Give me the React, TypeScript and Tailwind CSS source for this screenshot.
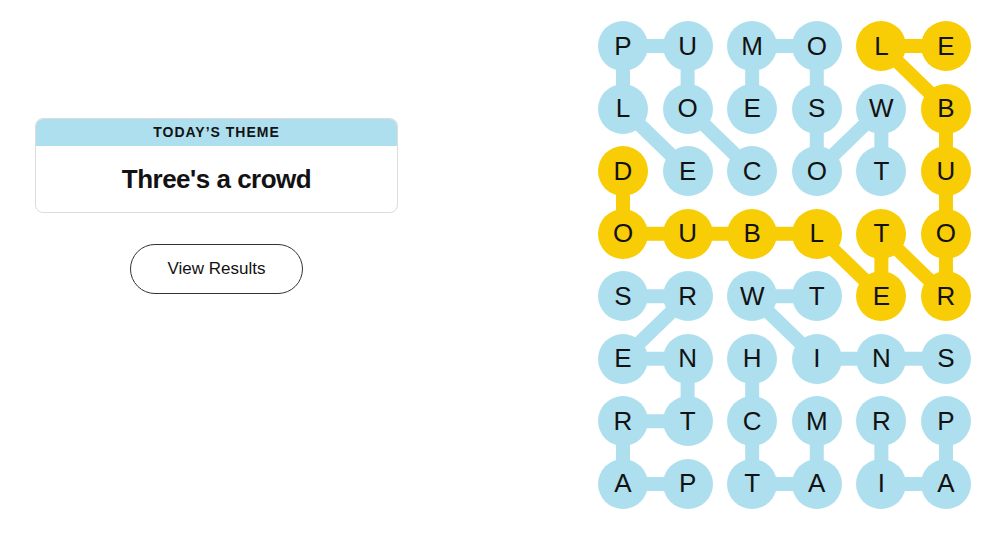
import React from 'react';

const BLUE = '#aedfee';
const YELLOW = '#f8cd05';

const letters = [
  'PUMOLE',
  'LOESWB',
  'DECOTU',
  'OUBLTO',
  'SRWTER',
  'ENHINS',
  'RTCMRP',
  'APTAIA',
];

// each found word as a path of [row, col]
const words: { cells: [number, number][]; spangram?: boolean }[] = [
  { cells: [[2, 2], [1, 1], [0, 1], [0, 0], [1, 0], [2, 1]] }, // COUPLE
  { cells: [[2, 4], [1, 4], [2, 3], [1, 3], [0, 3], [0, 2], [1, 2]] }, // TWOSOME
  {
    cells: [[2, 0], [3, 0], [3, 1], [3, 2], [3, 3], [4, 4], [3, 4], [4, 5], [3, 5], [2, 5], [1, 5], [0, 4], [0, 5]],
    spangram: true,
  }, // DOUBLETROUBLE
  { cells: [[7, 1], [7, 0], [6, 0], [6, 1], [5, 1], [5, 0], [4, 1], [4, 0]] }, // PARTNERS
  { cells: [[4, 3], [4, 2], [5, 3], [5, 4], [5, 5]] }, // TWINS
  { cells: [[6, 3], [7, 3], [7, 2], [6, 2], [5, 2]] }, // MATCH
  { cells: [[6, 5], [7, 5], [7, 4], [6, 4]] }, // PAIR
];

const COL = 64.6;
const ROW = 62.57;
const cx = (c: number) => 25 + c * COL;
const cy = (r: number) => 25 + r * ROW;

const spangramCells = new Set(
  words.filter(w => w.spangram).flatMap(w => w.cells.map(([r, c]) => `${r}-${c}`))
);

const Board: React.FC = () => (
  <div className="relative">
    <svg className="absolute inset-0 w-full h-full" viewBox="0 0 373 488" width={373} height={488}>
      {words.map((w, i) => (
        <polyline
          key={i}
          points={w.cells.map(([r, c]) => `${cx(c)},${cy(r)}`).join(' ')}
          fill="none"
          stroke={w.spangram ? YELLOW : BLUE}
          strokeWidth={14}
          strokeLinejoin="round"
        />
      ))}
    </svg>
    <div className="relative grid grid-cols-[repeat(6,50px)] gap-x-[14.6px] gap-y-[12.57px]">
      {letters.flatMap((row, r) =>
        row.split('').map((ch, c) => (
          <div
            key={`${r}-${c}`}
            className={`w-[50px] h-[50px] rounded-full flex items-center justify-center text-[26px] text-[#121212] ${
              spangramCells.has(`${r}-${c}`) ? 'bg-[#f8cd05]' : 'bg-[#aedfee]'
            }`}
          >
            {ch}
          </div>
        ))
      )}
    </div>
  </div>
);

export default function App() {
  return (
    <div
      className="w-full h-[533px] bg-white flex text-[#121212]"
      style={{ fontFamily: '"Liberation Sans", Arial, sans-serif' }}
    >
      <div className="pl-[35px] pt-[118px] w-[398px] flex flex-col">
        <div className="w-[363px] rounded-lg border border-[#dcdcdc] overflow-hidden">
          <div className="h-[27px] bg-[#aedfee] flex items-center justify-center text-[14px] font-bold tracking-[1px]">
            TODAY’S THEME
          </div>
          <div className="h-[66px] flex items-center justify-center text-[26px] font-bold tracking-[-0.5px]">
            Three's a crowd
          </div>
        </div>
        <div className="flex justify-center mt-[31px]">
          <button className="w-[173px] h-[50px] rounded-full border border-[#333333] bg-white text-[17px]">
            View Results
          </button>
        </div>
      </div>
      <div className="ml-[200px] pt-[21px]">
        <Board />
      </div>
    </div>
  );
}
